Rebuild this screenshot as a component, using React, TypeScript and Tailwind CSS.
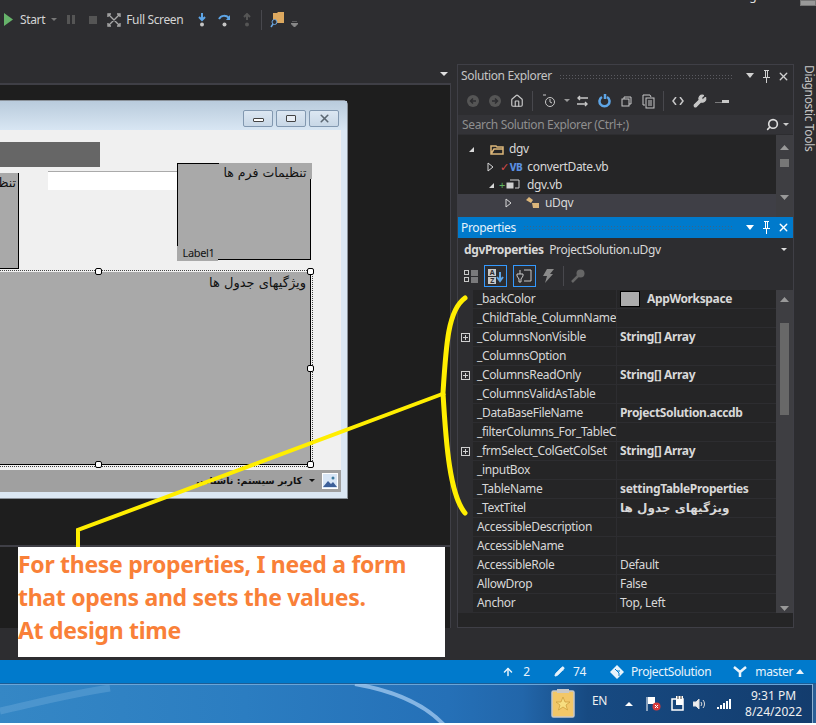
import { ArrowUp, Pencil, Home, Wrench, Search, X } from "lucide-react";

const ui = "[font-family:'Noto_Sans','Open_Sans',sans-serif] tracking-[-0.35px]";
const fa = "[font-family:'DejaVu_Sans',sans-serif] tracking-normal";

type Prop = { name: string; value?: string; bold?: boolean; plus?: boolean; swatch?: boolean; rtl?: boolean };

const props: Prop[] = [
  { name: "_backColor", value: "AppWorkspace", bold: true, swatch: true },
  { name: "_ChildTable_ColumnName" },
  { name: "_ColumnsNonVisible", value: "String[] Array", bold: true, plus: true },
  { name: "_ColumnsOption" },
  { name: "_ColumnsReadOnly", value: "String[] Array", bold: true, plus: true },
  { name: "_ColumnsValidAsTable" },
  { name: "_DataBaseFileName", value: "ProjectSolution.accdb", bold: true },
  { name: "_filterColumns_For_TableColumn" },
  { name: "_frmSelect_ColGetColSet", value: "String[] Array", bold: true, plus: true },
  { name: "_inputBox" },
  { name: "_TableName", value: "settingTableProperties", bold: true },
  { name: "_TextTitel", value: "ویژگیهای جدول ها", bold: true, rtl: true },
  { name: "AccessibleDescription" },
  { name: "AccessibleName" },
  { name: "AccessibleRole", value: "Default" },
  { name: "AllowDrop", value: "False" },
  { name: "Anchor", value: "Top, Left" },
];

function PanelTitle({ title, active }: { title: string; active?: boolean }) {
  const c = active ? "#ffffff" : "#d0d0d0";
  return (
    <div className={`flex items-center gap-[5px] pl-[3px] pr-[3px] text-[12px] ${active ? "h-[21px] bg-[#007acc] text-[#e6f2fa]" : "h-[22px] text-[#c4c4c4]"}`}>
      <span className="mr-[2px] leading-none">{title}</span>
      <div className={`h-[5px] flex-1 bg-[radial-gradient(circle,#5a5a60_1px,transparent_1px)] bg-[length:3px_3px] ${active ? "opacity-60" : ""}`} />
      <svg width="10" height="6" viewBox="0 0 10 6" className="ml-[8px]"><path d="M1 0h8L5 5z" fill={c} /></svg>
      <svg width="11" height="13" viewBox="0 0 11 13" className="ml-[1px]"><path d="M3 0h5v1H7v6h2v1H6v5H5V8H2V7h2V1H3zM5 1v6h1V1z" fill={c} /></svg>
      <X size={13} strokeWidth={2.5} color={c} />
    </div>
  );
}

function Handle({ className }: { className: string }) {
  return <span className={`absolute h-[7px] w-[7px] rounded-[2px] border border-black bg-white ${className}`} />;
}

function TreeRow({ indent, selected, children }: { indent: string; selected?: boolean; children: React.ReactNode }) {
  return (
    <div className={`flex items-center text-[12px] text-[#d8d8d8] ${indent} ${selected ? "h-[23px] bg-[#3f3f46] pb-[5px]" : "h-[18px]"}`}>
      {children}
    </div>
  );
}

function Expander({ open }: { open?: boolean }) {
  return open ? (
    <svg width="7" height="7" viewBox="0 0 7 7"><path d="M6 1v5H1z" fill="#d8d8d8" /></svg>
  ) : (
    <svg width="7" height="10" viewBox="0 0 7 10"><path d="M1 1l5 4-5 4z" fill="none" stroke="#d8d8d8" /></svg>
  );
}

function NavCircle({ back, className }: { back?: boolean; className?: string }) {
  return (
    <svg width="12" height="12" viewBox="0 0 12 12" className={className}>
      <circle cx="6" cy="6" r="6" fill="#555" />
      <path d={back ? "M9 6H4M6 3.500L3.500 6 6 8.500" : "M3 6h5M6 3.500L8.500 6 6 8.500"} stroke="#2d2d30" strokeWidth="1.500" fill="none" />
    </svg>
  );
}

function WinButton({ children }: { children: React.ReactNode }) {
  return (
    <span className="flex h-[17px] w-[30px] items-center justify-center rounded-[2px] border border-[#8298b0] bg-gradient-to-b from-[#dce7f2] to-[#c8d7e6]">
      {children}
    </span>
  );
}

export default function App() {
  return (
    <div className={`relative flex h-[725px] w-[816px] flex-col overflow-hidden bg-white ${ui}`}>
      {/* top toolbar */}
      <div className="flex h-[85px] shrink-0 flex-col bg-[#2d2d30]">
        <div className="flex h-[5px] justify-end text-[12px] leading-none text-[#e0e0e0]">
          <span className="-mt-[10px] mr-[24px]">Sign in</span>
          <span className="h-[6px] w-[16px] border border-[#777] bg-[#999]" />
        </div>
        <div className="flex h-[29px] items-center text-[12px] text-[#d4d4d4]">
          <svg width="9" height="13" viewBox="0 0 9 13" className="ml-[4px]"><path d="M0 0l9 6.500-9 6.500z" fill="#66b36a" /></svg>
          <span className="ml-[7px]">Start</span>
          <svg width="6" height="4" viewBox="0 0 6 4" className="ml-[6px]"><path d="M0 0h6L3 3z" fill="#777" /></svg>
          <div className="ml-[10px] flex gap-[2px]">
            <span className="h-[9px] w-[3px] bg-[#555]" />
            <span className="h-[9px] w-[3px] bg-[#555]" />
          </div>
          <span className="ml-[14px] h-[8px] w-[8px] bg-[#555]" />
          <svg width="14" height="14" viewBox="0 0 14 14" className="ml-[10px]" fill="none" stroke="#a8a8a8" strokeWidth="1.400">
            <path d="M1 4V1h3M10 1h3v3M13 10v3h-3M4 13H1v-3M2 2l10 10M12 2L2 12" />
          </svg>
          <span className="ml-[5px]">Full Screen</span>
          <svg width="8" height="14" viewBox="0 0 8 14" className="ml-[15px]"><path d="M4 0v6M1 4l3 3 3-3" stroke="#5ea5e6" strokeWidth="2" fill="none" /><circle cx="4" cy="11.500" r="2" fill="#c4c4c4" /></svg>
          <svg width="13" height="14" viewBox="0 0 13 14" className="ml-[12px]"><path d="M1 6c2-4 7-4 10-1" stroke="#5ea5e6" strokeWidth="2" fill="none" /><path d="M12 2v5H8z" fill="#5ea5e6" /><circle cx="6.500" cy="11.500" r="2" fill="#c4c4c4" /></svg>
          <svg width="8" height="14" viewBox="0 0 8 14" className="ml-[12px]"><path d="M4 7V1M1 4l3-3 3 3" stroke="#555" strokeWidth="2" fill="none" /><circle cx="4" cy="11.500" r="2" fill="#555" /></svg>
          <span className="ml-[10px] h-[20px] w-px bg-[#48484d]" />
          <svg width="15" height="17" viewBox="0 0 15 17" className="ml-[8px]"><path d="M3 2h4l1-1h6v11H3z" fill="#dca85f" /><circle cx="4.500" cy="11" r="2.500" fill="#2d2d30" stroke="#6aa6e0" /><path d="M3 13l-2 3" stroke="#6aa6e0" strokeWidth="1.500" /></svg>
          <svg width="7" height="6" viewBox="0 0 7 6" className="ml-[6px] mt-[8px]"><path d="M1 0h5M0 2.500h7L3.500 6z" stroke="#888" fill="#888" strokeWidth="1" /></svg>
        </div>
        <div className="mt-auto flex h-[20px] w-[451px] items-start justify-end border-b-2 border-[#3f3f46] pr-[3px] pt-[7px]">
          <svg width="8" height="5" viewBox="0 0 8 5"><path d="M0 0h8L4 4z" fill="#e0e0e0" /></svg>
        </div>
      </div>

      {/* main area */}
      <div className="flex h-[575px] shrink-0 bg-[#2d2d30]">
        <div className="flex w-[451px] shrink-0 flex-col">
          <div className="h-[460px] overflow-hidden border-r border-[#3f3f46] bg-[#1e1e1e] pt-[15px]">
            {/* designer form */}
            <div className="h-[399px] w-[348px] rounded-tr-[5px] border border-l-0 border-[#8a9199] bg-[#dbe7f3]">
              <div className="flex h-[29px] items-start justify-end gap-[3px] bg-gradient-to-b from-[#b9cbdc] to-[#d8e6f3] pr-[8px] pt-[9px]">
                <WinButton><span className="mt-[3px] h-[4px] w-[11px] rounded-[1px] border border-[#444] bg-white" /></WinButton>
                <WinButton><span className="h-[7px] w-[10px] rounded-[1px] border border-[#444] bg-[#e8eef5]" /></WinButton>
                <WinButton><X size={13} strokeWidth={3} color="#5c6873" /></WinButton>
              </div>
              <div className="h-[362px] w-[341px] bg-[#f0f0f0]">
                <div className="h-[12px]" />
                <div className="h-[25px] w-[100px] bg-[#666]" />
                <div className="-mt-[4px] flex items-start">
                  <div dir="rtl" className="mt-[10px] h-[96px] w-[19px] overflow-hidden border-r-[1.5px] border-b-[1.5px] border-black bg-[#a9a9a9]">
                    <div className={`-mr-[2px] h-[16px] whitespace-nowrap bg-[#a9a9a9] pr-[4px] text-[12.500px] leading-[19px] text-[#111] ${fa}`}>تنظیمات فرم ها</div>
                  </div>
                  <div className="ml-[29px] mt-[8px] h-[19px] w-[129px] border-t border-t-[#aaa] bg-white" />
                  <div className="flex h-[97px] w-[134px] flex-col justify-between border-[1.5px] border-black bg-[#a9a9a9]">
                    <div dir="rtl" className={`-mr-[1.500px] -mt-[1.500px] h-[16px] w-[93px] self-end bg-[#a9a9a9] pr-[5px] text-[12.500px] leading-[19px] text-[#111] ${fa}`}>تنظیمات فرم ها</div>
                    <span className="-mb-[1.500px] -ml-[1.500px] h-[15px] w-[41px] bg-[#a9a9a9] pl-[6px] text-[11px] leading-[14px] text-[#111]">Label1</span>
                  </div>
                </div>
                {/* selected group panel */}
                <div className="relative mt-[3px] h-[193px] w-[311px] border-r border-b border-black bg-[#a9a9a9] outline-1 outline-dotted outline-offset-[1px] outline-[#444]">
                  <div dir="rtl" className={`pr-[4px] pt-[1px] text-[13px] leading-[20px] text-[#111] ${fa}`}>ویژگیهای جدول ها</div>
                  <Handle className="left-[95px] -top-[4px]" />
                  <Handle className="-right-[4px] -top-[4px]" />
                  <Handle className="-right-[4px] top-[93px]" />
                  <Handle className="left-[95px] -bottom-[4px]" />
                  <Handle className="-right-[4px] -bottom-[4px]" />
                </div>
                {/* status strip */}
                <div className="mt-[5px] flex h-[22px] items-center justify-end gap-[7px] bg-[#a0a0a0] pr-[3px]">
                  <span dir="rtl" className={`whitespace-nowrap text-[9.500px] font-bold text-[#111] ${fa}`}>کاربر سیستم: ناشناس</span>
                  <svg width="6" height="4" viewBox="0 0 6 4"><path d="M0 0h6L3 3z" fill="#111" /></svg>
                  <svg width="16" height="16" viewBox="0 0 16 16"><rect x="0.500" y="0.500" width="15" height="15" fill="#d8e6f6" stroke="#fff" /><path d="M1 14l5-6 3 3 2-2 4 5z" fill="#3c5f99" /><circle cx="11" cy="5" r="1.500" fill="#3c7a9e" /></svg>
                </div>
              </div>
            </div>
          </div>
          <div className="h-[83px] border-t-2 border-r border-[#3f3f46] bg-[#1e1e1e]" />
        </div>

        {/* tool windows */}
        <div className="-mt-[21px] ml-[6px] flex h-[564px] w-[337px] shrink-0 flex-col border border-[#3f3f46] bg-[#2d2d30]">
          <PanelTitle title="Solution Explorer" />
          <div className="flex h-[28px] items-center pl-[9px] text-[#c8c8c8]">
            <NavCircle back />
            <NavCircle className="ml-[10px]" />
            <Home size={14} className="ml-[9px]" />
            <span className="ml-[8px] h-[20px] w-px bg-[#48484d]" />
            <svg width="14" height="14" viewBox="0 0 14 14" fill="none" stroke="#c8c8c8" className="ml-[9px]"><circle cx="8" cy="8" r="4.500" /><path d="M8 5v3l2 1M1 1h3" /></svg>
            <svg width="6" height="4" viewBox="0 0 6 4" className="ml-[8px]"><path d="M0 0h6L3 3z" fill="#999" /></svg>
            <svg width="13" height="12" viewBox="0 0 13 12" fill="none" stroke="#c8c8c8" strokeWidth="1.400" className="ml-[6px]"><path d="M12 3H2M4 1L2 3l2 2M1 9h10M9 7l2 2-2 2" /></svg>
            <svg width="13" height="14" viewBox="0 0 13 14" fill="none" stroke="#5ea5e6" strokeWidth="2.500" className="ml-[9px]"><path d="M4 3a5 5 0 1 0 5 0" /><path d="M7 0v5" /></svg>
            <svg width="12" height="12" viewBox="0 0 12 12" fill="none" stroke="#c8c8c8" className="ml-[10px]"><rect x="1" y="4" width="7" height="7" /><path d="M3 4V2h7v7H8" /></svg>
            <svg width="14" height="15" viewBox="0 0 14 15" fill="none" stroke="#c8c8c8" className="ml-[9px]"><path d="M3 11H1V1h7l1 2" /><rect x="4" y="4" width="8" height="10" /><path d="M6 7h4M6 9h4M6 11h4" /></svg>
            <span className="ml-[7px] h-[20px] w-px bg-[#48484d]" />
            <svg width="12" height="8" viewBox="0 0 12 8" fill="none" stroke="#c8c8c8" strokeWidth="1.500" className="ml-[8px]"><path d="M4 0L1 4l3 4M8 0l3 4-3 4" /></svg>
            <Wrench size={14} className="ml-[9px] fill-[#c8c8c8]" />
            <svg width="14" height="5" viewBox="0 0 14 5" className="ml-[8px]"><path d="M0 3.500h7V1h7v3H0z" fill="#c8c8c8" /></svg>
          </div>
          <div className="flex h-[19px] items-center bg-[#333337] pl-[4px] pr-[4px] text-[12px] text-[#8f8f8f]">
            <span className="flex-1">Search Solution Explorer (Ctrl+;)</span>
            <Search size={13} strokeWidth={3} color="#ddd" className="-scale-x-100" />
            <svg width="6" height="4" viewBox="0 0 6 4" className="ml-[4px]"><path d="M0 0h6L3 3z" fill="#ccc" /></svg>
          </div>
          <div className="mt-[1px] flex h-[82px] bg-[#252526]">
            <div className="flex-1 overflow-hidden pt-[5px]">
              <TreeRow indent="pl-[10px]">
                <Expander open />
                <svg width="14" height="11" viewBox="0 0 14 11" className="ml-[15px]" fill="none" stroke="#dcb67a" strokeWidth="1.500"><path d="M1 10V2h5l1 1h6v7zM1 10l3-5h9" /></svg>
                <span className="ml-[5px]">dgv</span>
              </TreeRow>
              <TreeRow indent="pl-[29px]">
                <Expander />
                <span className="ml-[6px] text-[11px] text-[#d84a4a]">✓</span>
                <span className="ml-[1px] text-[10px] font-extrabold text-[#5a8fe0]">VB</span>
                <span className="ml-[5px]">convertDate.vb</span>
              </TreeRow>
              <TreeRow indent="pl-[30px]">
                <Expander open />
                <span className="ml-[4px] text-[11px] text-[#5fb35f]">+</span>
                <svg width="14" height="12" viewBox="0 0 14 12" fill="none" stroke="#d0d0d0" className="ml-[1px]"><path d="M4 1h9v8H9" /><rect x="1" y="4" width="6" height="5" fill="#d0d0d0" /></svg>
                <span className="ml-[7px]">dgv.vb</span>
              </TreeRow>
              <TreeRow indent="pl-[47px]" selected>
                <Expander />
                <svg width="15" height="12" viewBox="0 0 15 12" className="ml-[13px]"><path d="M1 3l3-3 4 3-2 3zM7 6h7v5H8z" fill="#dcb67a" /></svg>
                <span className="ml-[5px]">uDqv</span>
              </TreeRow>
            </div>
            <div className="flex w-[17px] flex-col items-center bg-[#3e3e42] pt-[10px]">
              <svg width="9" height="5" viewBox="0 0 9 5"><path d="M4.500 0L9 5H0z" fill="#999" /></svg>
              <span className="mt-[9px] h-[8px] w-[9px] bg-[#777]" />
              <svg width="9" height="5" viewBox="0 0 9 5" className="mt-[28px]"><path d="M0 0h9L4.500 5z" fill="#999" /></svg>
            </div>
          </div>
          <PanelTitle title="Properties" active />
          <div className="flex h-[24px] items-center justify-between px-[6px] text-[12px] text-[#d8d8d8]">
            <span><b className="font-bold">dgvProperties</b>&nbsp; ProjectSolution.uDgv</span>
            <svg width="6" height="4" viewBox="0 0 6 4"><path d="M0 0h6L3 3z" fill="#ddd" /></svg>
          </div>
          <div className="flex h-[28px] items-center gap-[6px] pl-[6px]">
            <svg width="14" height="14" viewBox="0 0 14 14" fill="none" stroke="#c8c8c8"><rect x="0.500" y="1.500" width="4" height="4" /><rect x="0.500" y="8.500" width="4" height="4" /><path d="M7 2h7M7 4h7M7 6h7M7 9h7M7 11h7M7 13h7" /></svg>
            <span className="flex h-[22px] w-[23px] items-center justify-center border border-[#3399ff]">
              <svg width="16" height="15" viewBox="0 0 16 15">
                <rect x="0" y="0" width="8" height="7" fill="#c8c8c8" />
                <rect x="0" y="8" width="8" height="7" fill="#c8c8c8" />
                <text x="4" y="6" textAnchor="middle" fontSize="7" fontWeight="700" fill="#2d2d30">A</text>
                <text x="4" y="14" textAnchor="middle" fontSize="7" fontWeight="700" fill="#2d2d30">Z</text>
                <path d="M12 3v8M9 8l3 4 3-4" stroke="#5ea5e6" strokeWidth="2" fill="none" />
              </svg>
            </span>
            <span className="flex h-[22px] w-[23px] items-center justify-center border border-[#3399ff]">
              <svg width="17" height="15" viewBox="0 0 17 15" fill="none" stroke="#c8c8c8"><path d="M8 1h7v11H8M4 1v4M1 5h6v2l-2 3v3H3v-3L1 7z" /></svg>
            </span>
            <svg width="12" height="14" viewBox="0 0 12 14"><path d="M5 0h7L8 5h3L3 14l2-7H1z" fill="#8a8a8a" /></svg>
            <span className="ml-[3px] h-[20px] w-px bg-[#48484d]" />
            <svg width="14" height="14" viewBox="0 0 14 14" className="ml-[1px]"><circle cx="9.500" cy="4.500" r="4" fill="#666" /><path d="M7 7L1 13" stroke="#666" strokeWidth="2.500" /></svg>
          </div>
          <div className="flex shrink-0">
            <div className="flex-1">
              {props.map((p) => (
                <div key={p.name} className="flex h-[19px] text-[12px] leading-[18px] text-[#d8d8d8]">
                  <div className="flex w-[15px] shrink-0 items-center justify-center">
                    {p.plus && (
                      <svg width="9" height="9" viewBox="0 0 9 9" fill="none" stroke="#d0d0d0"><rect x="0.500" y="0.500" width="8" height="8" /><path d="M2 4.500h5M4.500 2v5" /></svg>
                    )}
                  </div>
                  <div className="w-[144px] shrink-0 overflow-hidden whitespace-nowrap border-r border-b border-[#2d2d30] bg-[#252526] pl-[4px]">{p.name}</div>
                  <div className={`flex flex-1 items-center gap-[7px] border-b border-[#2d2d30] bg-[#252526] pl-[3px] ${p.bold ? "font-bold" : ""}`}>
                    {p.swatch && <span className="h-[16px] w-[20px] border border-black bg-[#ababab]" />}
                    {p.rtl ? <span dir="rtl" className={`text-[12px] ${fa}`}>{p.value}</span> : p.value}
                  </div>
                </div>
              ))}
            </div>
            <div className="flex w-[17px] flex-col items-center bg-[#3e3e42] pt-[7px]">
              <svg width="9" height="5" viewBox="0 0 9 5"><path d="M4.500 0L9 5H0z" fill="#999" /></svg>
              <span className="mt-[21px] h-[92px] w-[9px] bg-[#686868]" />
              <svg width="9" height="5" viewBox="0 0 9 5" className="mt-[191px]"><path d="M0 0h9L4.500 5z" fill="#999" /></svg>
            </div>
          </div>
          <div className="flex-1 bg-[#252526]" />
        </div>

        {/* diagnostic tools strip */}
        <div className="-mt-[21px] ml-[8px] flex w-[14px] justify-center">
          <span className="whitespace-nowrap pt-[1px] text-[12px] leading-none text-[#c4c4c4] [writing-mode:vertical-rl]">Diagnostic Tools</span>
        </div>
      </div>

      {/* status bar */}
      <div className="flex h-[23px] shrink-0 items-center justify-end bg-[#007acc] pr-[12px] text-[12px] text-[#e8f3fb]">
        <ArrowUp size={12} strokeWidth={3} />
        <span className="ml-[9px]">2</span>
        <Pencil size={11} className="ml-[24px] fill-[#e8f3fb]" />
        <span className="ml-[8px]">74</span>
        <svg width="14" height="14" viewBox="0 0 14 14" className="ml-[24px]"><path d="M7 0l7 7-7 7-7-7z" fill="#e8f3fb" /><path d="M5 4l4 4v3M7 6l3 0" stroke="#007acc" fill="none" /></svg>
        <span className="ml-[7px]">ProjectSolution</span>
        <svg width="14" height="12" viewBox="0 0 14 12" className="ml-[22px]"><path d="M1 1l6 5 6-5M7 6v5" stroke="#e8f3fb" strokeWidth="2.500" fill="none" /></svg>
        <span className="ml-[8px]">master</span>
        <svg width="8" height="5" viewBox="0 0 8 5" className="ml-[3px]"><path d="M4 0l4 5H0z" fill="#e8f3fb" /></svg>
      </div>

      {/* windows taskbar */}
      <div className="relative flex h-[40px] shrink-0 items-center justify-end overflow-hidden border-t border-t-[#1c5d96] bg-[linear-gradient(90deg,#3587c5_0%,#2b7dc1_30%,#2570b7_55%,#2266aa_64%,#174a82_72%,#133c6d_100%)] pr-[14px] text-[#f0f0f0] shadow-[inset_0_1px_0_#6aa5d8]">
        <svg width="816" height="40" viewBox="0 0 816 40" fill="none" className="absolute left-0 top-0">
          <path d="M355 0C395 7 425 20 445 42" stroke="#9cc6ee" strokeWidth="4" opacity="0.8" />
          <path d="M0 27C40 18 70 10 110 4" stroke="#6aa8da" strokeWidth="7" opacity="0.45" />
        </svg>
        <span className="absolute right-0 top-0 h-full w-[4px] border-l border-[#8fb0d0] bg-[#2a5f96]" />
        <svg width="24" height="29" viewBox="0 0 24 29" className="relative mr-[17px]">
          <rect x="1" y="2" width="22" height="26" rx="1.500" fill="#f2c768" stroke="#c8c8c8" strokeWidth="1.500" />
          <rect x="6" y="0" width="12" height="4" fill="#c8c8c8" />
          <path d="M12 8l2 5h5l-4 3 1.500 5-4.500-3-4.500 3 1.500-5-4-3h5z" fill="#f7de80" stroke="#c99a3a" strokeWidth="0.700" />
        </svg>
        <span className="relative mb-[6px] mr-[18px] text-[12px]">EN</span>
        <svg width="8" height="4" viewBox="0 0 8 4" className="relative mr-[13px]"><path d="M4 0l4 4H0z" fill="#fff" /></svg>
        <svg width="15" height="15" viewBox="0 0 15 15" className="relative mr-[10px]"><path d="M1 1v14" stroke="#fff" /><path d="M2 1h7v7H2z" fill="#fff" /><circle cx="10.500" cy="10.500" r="4" fill="#d83b3b" /><path d="M9 9l3 3M12 9l-3 3" stroke="#fff" /></svg>
        <svg width="13" height="15" viewBox="0 0 13 15" className="relative mr-[9px]"><rect x="1" y="3" width="11" height="11" fill="none" stroke="#fff" strokeWidth="1.500" /><rect x="5" y="0" width="7" height="9" fill="#fff" /><path d="M7 0v3M10 0v3" stroke="#333" /></svg>
        <svg width="14" height="12" viewBox="0 0 14 12" className="relative mr-[10px]" fill="none" stroke="#ddd"><path d="M0 4h3l3-3v10L3 8H0z" fill="#eee" /><path d="M8 4a3 3 0 0 1 0 4M10 2a6 6 0 0 1 0 8" /></svg>
        <div className="relative mr-[14px] flex items-end gap-[1px]">
          <span className="h-[2px] w-[2px] bg-white" />
          <span className="h-[4px] w-[2px] bg-white" />
          <span className="h-[6px] w-[2px] bg-white" />
          <span className="h-[8px] w-[2px] bg-white" />
          <span className="h-[10px] w-[2px] bg-white" />
        </div>
        <div className="relative flex flex-col items-center text-[12px] leading-[16px] tracking-normal">
          <span>9:31 PM</span>
          <span>8/24/2022</span>
        </div>
      </div>
      <div className="h-[2px] shrink-0 bg-white" />

      {/* annotation drawn over the screenshot */}
      <svg width="816" height="725" viewBox="0 0 816 725" fill="none" className="pointer-events-none absolute inset-0">
        <path d="M78 547V530L445 393" stroke="#ffee00" strokeWidth="4" />
        <path d="M465 298C448 310 446 345 443 393C446 445 450 495 465 513" stroke="#ffee00" strokeWidth="5" strokeLinecap="round" />
      </svg>
      <div className="absolute left-[18px] top-[547px] h-[110px] w-[427px] whitespace-nowrap bg-white pt-[1px] text-[23px] font-bold leading-[33px] tracking-[-0.3px] text-[#f98038]">
        For these properties, I need a form
        <br />
        that opens and sets the values.
        <br />
        At design time
      </div>
    </div>
  );
}
